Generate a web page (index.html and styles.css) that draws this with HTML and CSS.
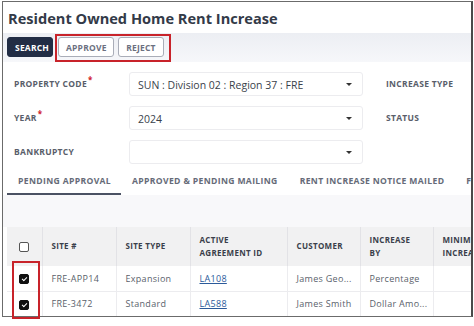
FILE: index.html
```html
<!DOCTYPE html>
<html lang="en">
	<head>
		<meta charset="utf-8"/>
		<link rel="stylesheet" href="styles.css">
		<title>Resident Owned Home Rent Increase</title>
	</head>
	<body>
		<div class="frame">
			<header class="title">Resident Owned Home Rent Increase</header>
			<div class="toolbar">
				<button class="btn btn-dark">SEARCH</button>
				<button class="btn btn-light">APPROVE</button>
				<button class="btn btn-light">REJECT</button>
				<span class="mark mark-buttons"></span>
			</div>
			<form class="filters">
				<label class="lbl">PROPERTY CODE<sup>*</sup></label>
				<div class="select">SUN : Division 02 : Region 37 : FRE <span class="caret"></span></div>
				<label class="lbl lbl-right">INCREASE TYPE</label>

				<label class="lbl">YEAR<sup>*</sup></label>
				<div class="select">2024 <span class="caret"></span></div>
				<label class="lbl lbl-right">STATUS</label>

				<label class="lbl">BANKRUPTCY</label>
				<div class="select"><span class="caret"></span></div>
				<span></span>
			</form>
			<nav class="tabs">
				<a class="tab active">PENDING APPROVAL</a>
				<a class="tab">APPROVED &amp; PENDING MAILING</a>
				<a class="tab">RENT INCREASE NOTICE MAILED</a>
				<a class="tab">F</a>
			</nav>
			<div class="band"></div>
			<table class="grid">
				<thead>
					<tr>
						<th class="chk"><span class="box"></span></th>
						<th class="c-site">SITE #</th>
						<th class="c-type">SITE TYPE</th>
						<th class="c-agr">ACTIVE<br>AGREEMENT ID</th>
						<th class="c-cust">CUSTOMER</th>
						<th class="c-inc">INCREASE<br>BY</th>
						<th class="c-min">MINIMUM<br>INCREASE</th>
					</tr>
				</thead>
				<tbody>
					<tr>
						<td class="chk"><span class="box checked"></span></td>
						<td>FRE-APP14</td>
						<td>Expansion</td>
						<td><a class="link">LA108</a></td>
						<td>James Geo...</td>
						<td>Percentage</td>
						<td></td>
					</tr>
					<tr>
						<td class="chk"><span class="box checked"></span></td>
						<td>FRE-3472</td>
						<td>Standard</td>
						<td><a class="link">LA588</a></td>
						<td>James Smith</td>
						<td>Dollar Amo...</td>
						<td></td>
					</tr>
				</tbody>
			</table>
		</div>
		<span class="mark mark-checks"></span>
	</body>
</html>
```

FILE: styles.css
```css
* {
	margin: 0;
	padding: 0;
	box-sizing: border-box;
}
body {
	background-color: #ffffff;
	font-family: "Open Sans", "DejaVu Sans", sans-serif;
	color: #3a3f4b;
	position: relative;
	height: 326px;
	overflow: hidden;
}
.frame {
	position: relative;
	margin: 1px 0 0 2px;
	width: 471px;
	height: 316px;
	border: 1px solid #6b6b6b;
	border-right: 2px solid #4a4a4a;
	overflow: hidden;
}
.title {
	height: 31px;
	padding: 6px 0 0 5px;
	font-size: 14.6px;
	font-weight: 700;
	color: #333a48;
	background-color: #ffffff;
}
.toolbar {
	position: relative;
	display: flex;
	gap: 4px;
	height: 29px;
	padding: 4px 4px;
	background: linear-gradient(#eceef3, #f6f7fa);
}
.btn {
	font-family: inherit;
	font-size: 8.5px;
	font-weight: 700;
	height: 20px;
	padding: 0 7px;
	border-radius: 3px;
	letter-spacing: 0.2px;
}
.btn-dark {
	width: 46px;
	background-color: #222d45;
	color: #ffffff;
	border: 1px solid #222d45;
}
.btn-light {
	background-color: #ffffff;
	color: #6b7080;
	border: 1px solid #a9adb8;
}
.btn:nth-child(2) {
	margin-left: 1px;
	width: 56px;
}
.btn:nth-child(3) {
	width: 46px;
}
.mark {
	position: absolute;
	border: 2px solid #c8232a;
}
.mark-buttons {
	left: 52px;
	top: 1px;
	width: 116px;
	height: 28px;
}
.mark-checks {
	left: 12px;
	top: 261px;
	width: 28px;
	height: 58px;
}
.filters {
	display: grid;
	grid-template-columns: 115px 234px auto;
	grid-auto-rows: 24px;
	row-gap: 10px;
	column-gap: 0;
	align-items: center;
	padding: 10px 0 3px 11px;
}
.lbl {
	font-size: 8.5px;
	font-weight: 700;
	color: #595e6a;
	letter-spacing: 0.3px;
	white-space: nowrap;
	line-height: 12px;
}
.lbl-right {
	margin-left: 23px;
}
.lbl sup {
	color: #d0202a;
	font-size: 8px;
	margin-left: 1px;
	line-height: 0;
	vertical-align: 4px;
}
.select {
	position: relative;
	height: 24px;
	padding: 5px 8px;
	border: 1px solid #ececef;
	border-radius: 3px;
	font-size: 10.5px;
	color: #3a3f4b;
}
.caret {
	position: absolute;
	right: 10px;
	top: 10px;
	border-left: 3px solid transparent;
	border-right: 3px solid transparent;
	border-top: 3px solid #333;
}
.tabs {
	display: flex;
	height: 28px;
	padding-left: 4px;
}
.tab {
	font-size: 8.6px;
	font-weight: 700;
	color: #666b78;
	padding: 8px 11px 0;
	white-space: nowrap;
	letter-spacing: 0.35px;
}
.tab.active {
	width: 114px;
	border-bottom: 2px solid #4b5263;
}
.band {
	height: 32px;
	background-color: #f8f8fa;
}
.grid {
	margin-left: 4px;
	border-collapse: collapse;
	table-layout: fixed;
	width: 480px;
	font-size: 9px;
}
.grid th {
	height: 39px;
	background-color: #f1f1f2;
	text-align: left;
	font-size: 8px;
	font-weight: 700;
	color: #3a3f4b;
	padding: 0 9px;
	border-right: 1px solid #e2e2e6;
	line-height: 1.6;
	white-space: nowrap;
	overflow: hidden;
	letter-spacing: 0.3px;
}
.grid td {
	height: 25px;
	padding: 0 9px;
	color: #5a5f6b;
	border-right: 1px solid #ececef;
	border-bottom: 1px solid #ececef;
	white-space: nowrap;
	letter-spacing: 0.3px;
}
.grid .chk {
	width: 35px;
	text-align: center;
	padding: 0;
}
.c-site { width: 74px; }
.c-type { width: 74px; }
.c-agr { width: 97px; }
.c-cust { width: 73px; }
.c-inc { width: 73px; }
.c-min { width: 60px; }
.box {
	display: inline-block;
	width: 10px;
	height: 10px;
	border: 1px solid #555;
	border-radius: 2px;
	background-color: #ffffff;
	vertical-align: middle;
}
.box.checked {
	position: relative;
	background-color: #111;
	border-color: #111;
}
.box.checked::after {
	content: "";
	position: absolute;
	left: 3px;
	top: 1px;
	width: 2px;
	height: 4px;
	border-right: 1.5px solid #fff;
	border-bottom: 1.5px solid #fff;
	transform: rotate(45deg);
}
.link {
	color: #2b5a9a;
	text-decoration: underline;
}
```
